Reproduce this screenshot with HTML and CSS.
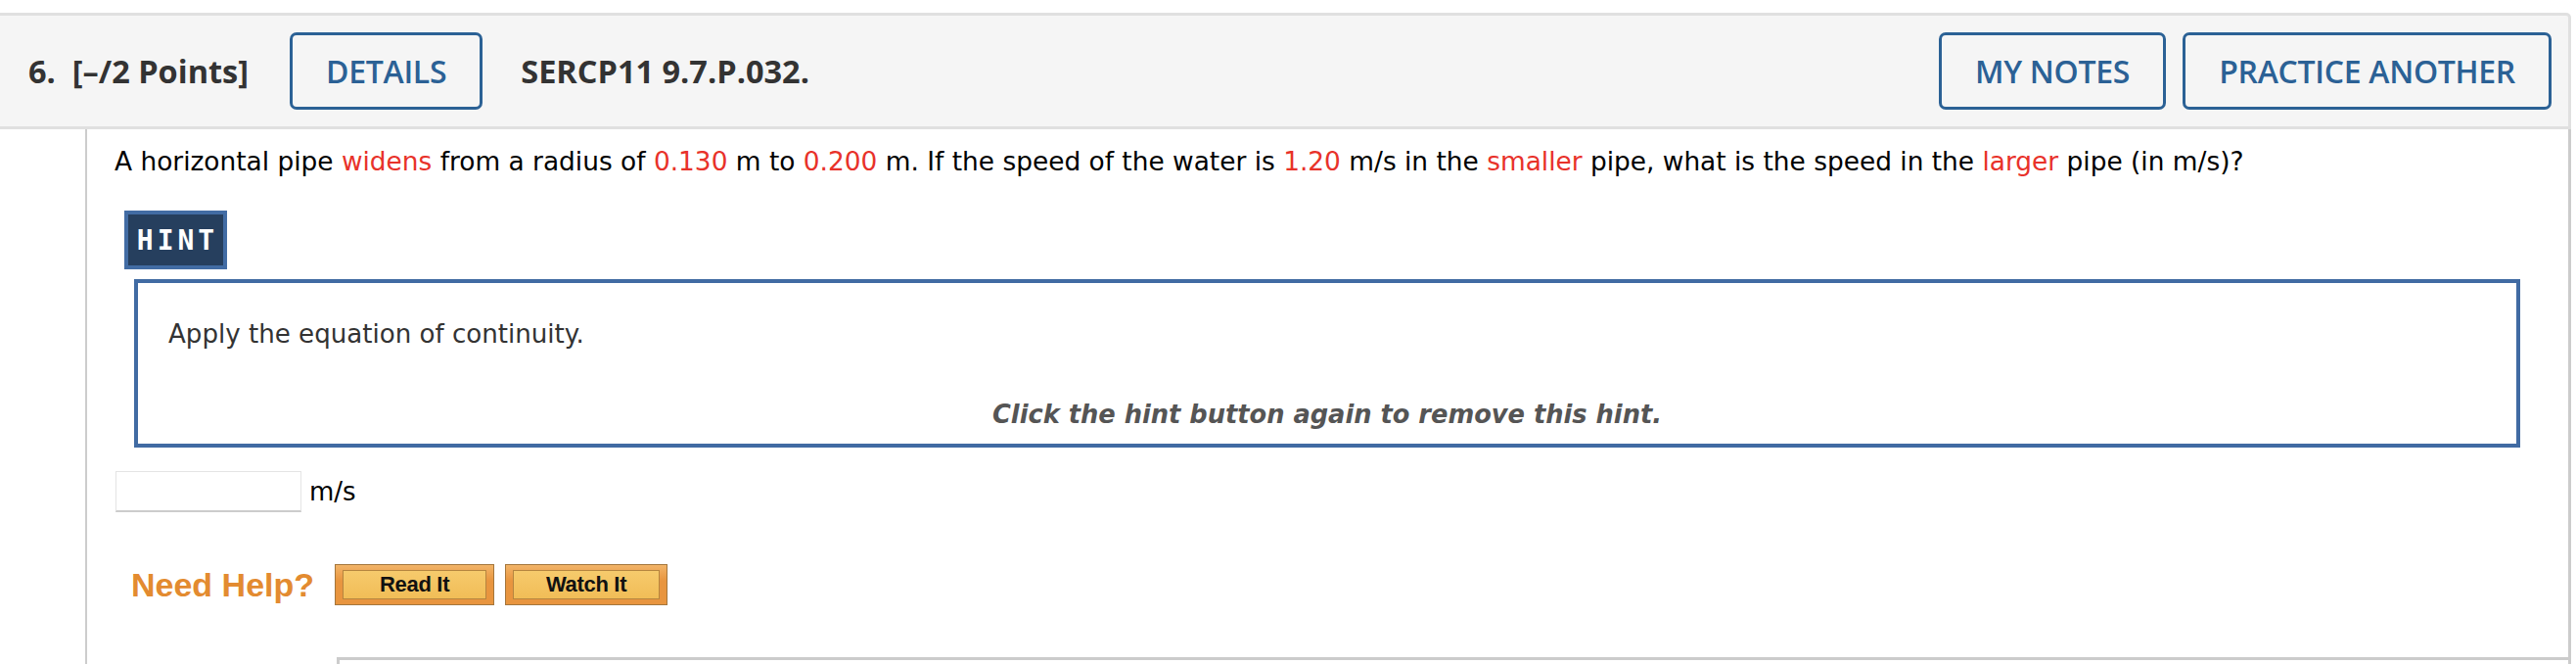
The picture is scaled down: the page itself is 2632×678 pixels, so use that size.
FILE: index.html
```html
<!DOCTYPE html>
<html lang="en">
<head>
<meta charset="utf-8">
<title>Question 6</title>
<link rel="stylesheet" href="styles.css">
</head>
<body>
<div class="page">
  <header class="qhead">
    <div class="qtitle">
      <span class="qnum">6.&nbsp; [–/2 Points]</span>
      <button class="outline-btn">DETAILS</button>
      <span class="qcode">SERCP11 9.7.P.032.</span>
    </div>
    <div class="qactions">
      <button class="outline-btn">MY NOTES</button>
      <button class="outline-btn">PRACTICE ANOTHER</button>
    </div>
  </header>
  <div class="qbody">
    <div class="qcontent">
      <p class="prompt">A horizontal pipe <span class="red">widens</span> from a radius of <span class="red">0.130</span> m to <span class="red">0.200</span> m. If the speed of the water is <span class="red">1.20</span> m/s in the <span class="red">smaller</span> pipe, what is the speed in the <span class="red">larger</span> pipe (in m/s)?</p>
      <button class="hint-btn">HINT</button>
      <div class="hint-box">
        <p class="hint-text">Apply the equation of continuity.</p>
        <p class="hint-note">Click the hint button again to remove this hint.</p>
      </div>
      <div class="answer-row">
        <input class="answer" type="text" aria-label="answer">
        <span class="unit">m/s</span>
      </div>
      <div class="help-row">
        <span class="need-help">Need Help?</span>
        <button class="help-btn"><span class="help-inner">Read It</span></button>
        <button class="help-btn"><span class="help-inner">Watch It</span></button>
      </div>
      <div class="next-box"></div>
    </div>
  </div>
</div>
</body>
</html>
```
FILE: styles.css
```css
html, body {
  margin: 0;
  padding: 0;
  background: #ffffff;
}

.page {
  width: 2627px;
  padding-top: 13px;
}

/* ---------- header ---------- */
.qhead {
  box-sizing: border-box;
  height: 119px;
  display: flex;
  align-items: center;
  justify-content: space-between;
  background: #f5f5f5;
  border-top: 3px solid #e0e0e0;
  border-bottom: 3px solid #e0e0e0;
  border-right: 3px solid #e0e0e0;
  border-top-right-radius: 5px;
  padding: 0 17px 0 29px;
  font-family: "Open Sans", "Liberation Sans", sans-serif;
}

.qtitle {
  display: flex;
  align-items: center;
}

.qnum,
.qcode {
  font-size: 32.5px;
  font-weight: 700;
  color: #333333;
  white-space: pre;
}

.qnum {
  margin-right: 42px;
}

.qcode {
  margin-left: 39px;
}

.qactions {
  display: flex;
  gap: 17px;
}

.outline-btn {
  box-sizing: border-box;
  height: 79px;
  padding: 0 34px;
  background: transparent;
  border: 3px solid #2b6195;
  border-radius: 7px;
  color: #2b6195;
  font-family: "Open Sans", "Liberation Sans", sans-serif;
  font-size: 32px;
  font-weight: 600;
  letter-spacing: -0.3px;
  cursor: pointer;
}

/* ---------- body ---------- */
.qbody {
  margin-left: 87px;
  border-left: 2px solid #cccccc;
  padding-bottom: 20px;
}

.qcontent {
  border-right: 3px solid #cccccc;
  border-bottom: 3px solid transparent;
  border-bottom-right-radius: 9px;
  padding-left: 28px;
  font-family: "DejaVu Sans", Verdana, sans-serif;
}

.prompt {
  margin: 0;
  padding-top: 18px;
  font-size: 26.4px;
  line-height: 30px;
  color: #000000;
}

.red {
  color: #e8322a;
}

.hint-btn {
  display: block;
  box-sizing: border-box;
  width: 105px;
  height: 60px;
  margin: 35px 0 0 10px;
  padding: 0;
  background: #263f5e;
  border: 4px solid #426ca4;
  color: #ffffff;
  font-family: "DejaVu Sans Mono", monospace;
  font-weight: 700;
  font-size: 28px;
  letter-spacing: 4px;
  text-indent: 4px;
  cursor: pointer;
}

.hint-box {
  margin: 10px 49px 0 20px;
  border: 4px solid #416ba3;
  padding: 37px 31px 15px;
}

.hint-text {
  margin: 0;
  font-size: 26.1px;
  line-height: 30px;
  color: #333333;
}

.hint-note {
  margin: 52px 0 0;
  text-align: center;
  font-size: 25.7px;
  line-height: 30px;
  font-weight: 700;
  font-style: italic;
  color: #555555;
}

.answer-row {
  display: flex;
  align-items: center;
  margin: 24px 0 0 1px;
}

.answer {
  box-sizing: border-box;
  width: 190px;
  height: 42px;
  margin: 0;
  border: 1px solid #e4e4e4;
  border-bottom: 2px solid #cccccc;
  background: #ffffff;
  outline: none;
}

.unit {
  margin-left: 8px;
  font-size: 26px;
  color: #000000;
}

.help-row {
  display: flex;
  align-items: center;
  margin: 53px 0 0 17px;
  height: 42px;
}

.need-help {
  font-family: "Liberation Sans", Arial, sans-serif;
  font-weight: 700;
  font-size: 34px;
  color: #e38b30;
  margin-right: 21px;
}

.help-btn {
  box-sizing: border-box;
  display: flex;
  height: 42px;
  padding: 5px 7px;
  margin: 0 11px 0 0;
  background: linear-gradient(#f2b468, #e8953f 40%, #e8953f);
  border: 1px solid #a4763c;
  cursor: pointer;
}

.help-btn:first-of-type {
  width: 163px;
}

.help-btn:last-of-type {
  width: 166px;
}

.help-inner {
  flex: 1;
  display: flex;
  align-items: center;
  justify-content: center;
  background: linear-gradient(#f6ca6c, #f1bd57);
  border: 1px solid #b6853f;
  font-family: "Liberation Sans", Arial, sans-serif;
  font-weight: 700;
  font-size: 22px;
  letter-spacing: -0.3px;
  color: #111111;
}

.next-box {
  margin: 53px 0 0 227px;
  height: 10px;
  border-top: 3px solid #cccccc;
  border-left: 3px solid #cccccc;
}
```
